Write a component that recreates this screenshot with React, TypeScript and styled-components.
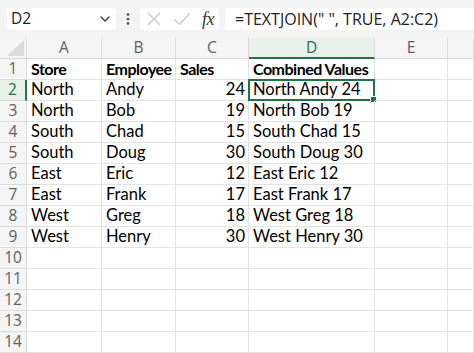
import styled, { createGlobalStyle } from "styled-components";

const GlobalStyle = createGlobalStyle`
  html, body {
    margin: 0;
    padding: 0;
    background: #ffffff;
    overflow: hidden;
  }
`

const Page = styled.div`
  width: 474px;
  height: 353px;
  overflow: hidden;
  display: flex;
  flex-direction: column;
  background: #ffffff;
`

const Toolbar = styled.div`
  height: 38px;
  flex: none;
  display: flex;
  align-items: flex-start;
  padding: 8px 0 0 7px;
  box-sizing: border-box;
  background: #f3f3f3;
`

const NameBox = styled.div`
  width: 109px;
  height: 22px;
  box-sizing: border-box;
  background: #ffffff;
  border-radius: 4px;
  display: flex;
  align-items: center;
  justify-content: space-between;
  padding: 0 4px 0 4px;
  font: 400 15.5px/1 "Open Sans", "Noto Sans", sans-serif;
  color: #222;
`

const Dots = styled.div`
  width: 24px;
  height: 22px;
  display: flex;
  align-items: center;
  justify-content: center;
`

const FxBox = styled.div`
  width: 79px;
  height: 22px;
  background: #ffffff;
  border-radius: 4px;
  display: flex;
  align-items: center;
  justify-content: space-between;
  padding: 0 5px 0 6px;
  box-sizing: border-box;
`

const Fx = styled.span`
  font: italic 400 18px/1 "Liberation Serif", "DejaVu Serif", serif;
  color: #333;
  letter-spacing: -0.5px;
`

const FormulaBar = styled.div`
  margin-left: 6px;
  flex: 1;
  height: 22px;
  background: #ffffff;
  border-radius: 4px 0 0 4px;
  display: flex;
  align-items: center;
  padding-left: 10px;
  font: 400 16px/1 "Open Sans", "Noto Sans", sans-serif;
  color: #222;
  white-space: nowrap;
`

const Grid = styled.div`
  display: grid;
  grid-template-columns: 27px 75px 74px 73px 126px 73px 1fr;
  grid-auto-rows: 21px;
`

const Corner = styled.div`
  background: #f5f5f5;
  border-right: 1px solid #dcdcdc;
  border-bottom: 1px solid #dcdcdc;
  box-sizing: border-box;
  position: relative;

  &::after {
    content: "";
    position: absolute;
    right: 2px;
    bottom: 2px;
    width: 0;
    height: 0;
    border-left: 17px solid transparent;
    border-bottom: 16px solid #dadada;
  }
`

const ColHead = styled.div<{ $active?: boolean }>`
  background: ${p => p.$active ? "#e8f0ea" : "#f5f5f5"};
  border-right: 1px solid #dcdcdc;
  border-bottom: ${p => p.$active ? "2px solid #217346" : "1px solid #dcdcdc"};
  box-sizing: border-box;
  display: flex;
  align-items: center;
  justify-content: center;
  font: 400 15.5px/1 "Open Sans", "Noto Sans", sans-serif;
  color: ${p => p.$active ? "#217346" : "#5f5f5f"};
`

const RowHead = styled.div<{ $active?: boolean }>`
  background: ${p => p.$active ? "#e8f0ea" : "#f5f5f5"};
  border-right: ${p => p.$active ? "2px solid #217346" : "1px solid #dcdcdc"};
  border-bottom: 1px solid #dcdcdc;
  box-sizing: border-box;
  display: flex;
  align-items: center;
  justify-content: center;
  font: 400 15.5px/1 "Open Sans", "Noto Sans", sans-serif;
  color: ${p => p.$active ? "#217346" : "#5f5f5f"};
`

const Cell = styled.div<{ $bold?: boolean, $num?: boolean, $selected?: boolean }>`
  border-right: 1px solid #e3e3e3;
  border-bottom: 1px solid #e3e3e3;
  box-sizing: border-box;
  display: flex;
  align-items: flex-end;
  justify-content: ${p => p.$num ? "flex-end" : "flex-start"};
  padding: 0 3px 1px 4px;
  font: ${p => p.$bold ? "700 16px" : "400 16.5px"}/1.15 "Lato", "Open Sans", sans-serif;
  letter-spacing: ${p => p.$bold ? "-0.5px" : "0"};
  color: #000;
  white-space: nowrap;
  overflow: visible;
  position: relative;

  ${p => p.$selected && `
    &::before {
      content: "";
      position: absolute;
      left: -1px;
      top: -1px;
      right: -1px;
      bottom: -1px;
      border: 2px solid #217346;
      pointer-events: none;
    }
    &::after {
      content: "";
      position: absolute;
      right: -3px;
      bottom: -3px;
      width: 5px;
      height: 5px;
      background: #217346;
      border: 1px solid #fff;
    }
  `}
`

type Row = [string, string, string, string]

const rows: Row[] = [
  ["Store", "Employee", "Sales", "Combined Values"],
  ["North", "Andy", "24", "North Andy 24"],
  ["North", "Bob", "19", "North Bob 19"],
  ["South", "Chad", "15", "South Chad 15"],
  ["South", "Doug", "30", "South Doug 30"],
  ["East", "Eric", "12", "East Eric 12"],
  ["East", "Frank", "17", "East Frank 17"],
  ["West", "Greg", "18", "West Greg 18"],
  ["West", "Henry", "30", "West Henry 30"],
]

const TOTAL_ROWS = 14

const Chevron = () =>
  <svg width="14" height="14" viewBox="0 0 14 14">
    <path d="M3 5 L7 9 L11 5" fill="none" stroke="#333" strokeWidth="1.3" strokeLinecap="round" strokeLinejoin="round" />
  </svg>

const VDots = () =>
  <svg width="4" height="14" viewBox="0 0 4 14">
    <circle cx="2" cy="2.5" r="1.3" fill="#444" />
    <circle cx="2" cy="7" r="1.3" fill="#444" />
    <circle cx="2" cy="11.5" r="1.3" fill="#444" />
  </svg>

const Cross = () =>
  <svg width="16" height="16" viewBox="0 0 16 16">
    <path d="M2 2 L14 14 M14 2 L2 14" fill="none" stroke="#c4c4c4" strokeWidth="1.2" />
  </svg>

const Check = () =>
  <svg width="18" height="16" viewBox="0 0 18 16">
    <path d="M1.5 8.5 L6.5 13.5 L16.5 2.5" fill="none" stroke="#c4c4c4" strokeWidth="1.2" />
  </svg>

const App = () => {

  const cols = ["A", "B", "C", "D", "E", ""]

  return <Page>
    <GlobalStyle />
    <Toolbar>
      <NameBox>
        <span>D2</span>
        <Chevron />
      </NameBox>
      <Dots><VDots /></Dots>
      <FxBox>
        <Cross />
        <Check />
        <Fx>fx</Fx>
      </FxBox>
      <FormulaBar>=TEXTJOIN(" ", TRUE, A2:C2)</FormulaBar>
    </Toolbar>
    <Grid>
      <Corner />
      {
        cols.map((c, i) => <ColHead key={`col_${i}`} $active={c === "D"}>{c}</ColHead>)
      }
      {
        Array.from({ length: TOTAL_ROWS }, (_, r) => {
          const data = rows[r]
          return [
            <RowHead key={`rh_${r}`} $active={r === 1}>{r + 1}</RowHead>,
            ...[0, 1, 2, 3, 4, 5].map(c =>
              <Cell
                key={`cell_${r}_${c}`}
                $bold={r === 0}
                $num={r > 0 && c === 2}
                $selected={r === 1 && c === 3}
              >
                {data && c < 4 ? data[c] : ""}
              </Cell>
            )
          ]
        })
      }
    </Grid>
  </Page>
}

export default App
